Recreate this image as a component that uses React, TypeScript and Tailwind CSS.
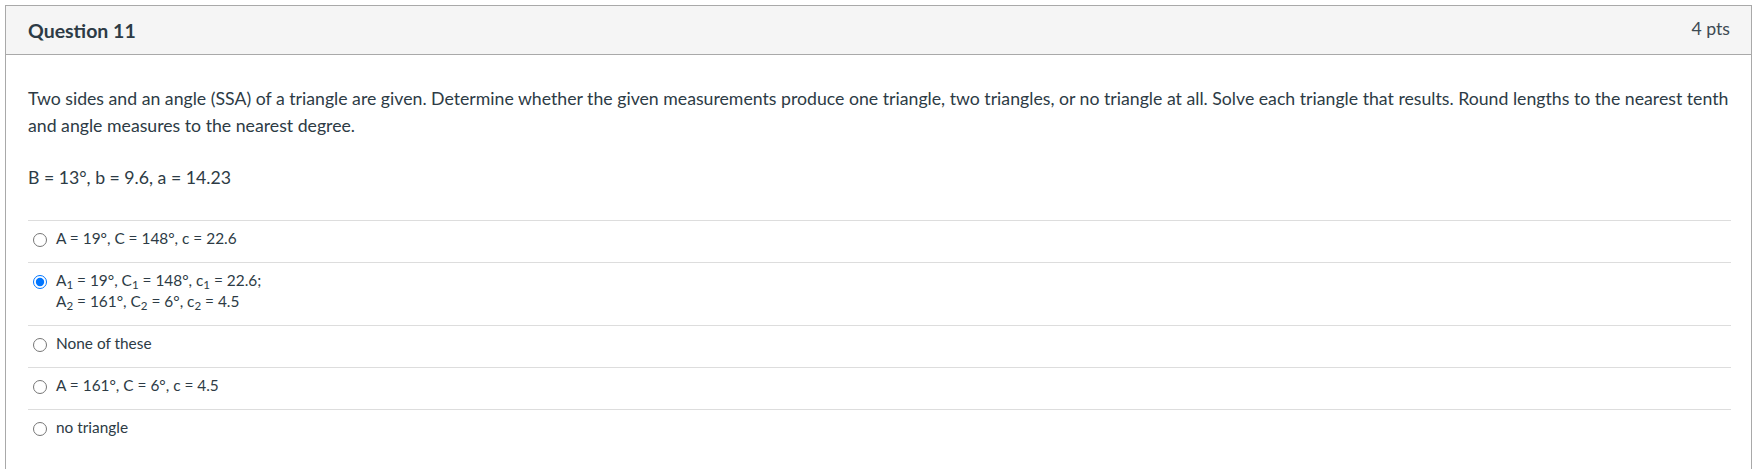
const options = [
  { id: "a", lines: [<>A = 19°, C = 148°, c = 22.6</>] },
  {
    id: "b",
    lines: [
      <>
        A<sub>1</sub> = 19°, C<sub>1</sub> = 148°, c<sub>1</sub> = 22.6;
      </>,
      <>
        A<sub>2</sub> = 161°, C<sub>2</sub> = 6°, c<sub>2</sub> = 4.5
      </>,
    ],
  },
  { id: "c", lines: [<>None of these</>] },
  { id: "d", lines: [<>A = 161°, C = 6°, c = 4.5</>] },
  { id: "e", lines: [<>no triangle</>] },
];

export default function App() {
  return (
    <div className="min-h-screen bg-white pl-[5px] pr-[2px] pt-[5px] font-['Lato',sans-serif] text-[#2d3b45]">
      <div className="border border-[#a9a9a9]">
        <div className="flex h-[49px] items-center justify-between border-b border-[#a9a9a9] bg-[#f5f5f5] pl-[22px] pr-[21px]">
          <h2 className="pt-[1px] text-[19.5px] font-bold">Question 11</h2>
          <div className="pb-[1px] text-[17.7px] text-[#3d4a53]">4 pts</div>
        </div>

        <div className="pb-[60px] pl-[22px] pr-[20px] pt-[31px]">
          <p className="text-[17.7px] leading-[26.6px]">
            Two sides and an angle (SSA) of a triangle are given. Determine whether the given measurements
            produce one triangle, two triangles, or no triangle at all. Solve each triangle that results. Round
            lengths to the nearest tenth and angle measures to the nearest degree.
          </p>
          <p className="mt-[26px] text-[17.7px] leading-[26.6px]">B = 13°, b = 9.6, a = 14.23</p>

          <div className="mt-[28px]">
            {options.map((o, i) => (
              <label
                key={o.id}
                className="flex items-start border-t border-[#dddddd] pt-[7px] pb-[13px] text-[15.4px] leading-[21px]"
              >
                <input
                  type="radio"
                  name="q11"
                  defaultChecked={i === 1}
                  className="ml-[5px] mr-[9px] mt-[5px] h-[14px] w-[14px] shrink-0"
                />
                <div className="flex flex-col">
                  {o.lines.map((l, j) => (
                    <span key={j}>{l}</span>
                  ))}
                </div>
              </label>
            ))}
          </div>
        </div>
      </div>
    </div>
  );
}
